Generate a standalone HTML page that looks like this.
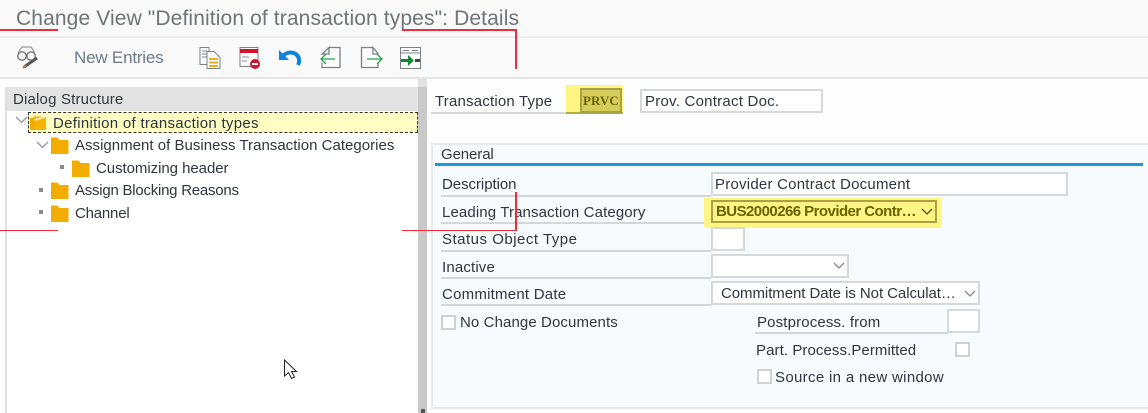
<!DOCTYPE html>
<html><head><meta charset="utf-8">
<style>
html,body{margin:0;padding:0;background:#fff}
#w{position:relative;width:1148px;height:413px;overflow:hidden;background:#fff}
#p{position:absolute;left:0;top:0;width:1148px;height:413px;overflow:hidden;background:#fff;font-family:"Liberation Sans",sans-serif;font-size:15px;color:#2f3640;filter:blur(.35px)}
#p div,#p svg{position:absolute}
.t{white-space:nowrap;line-height:18px;height:18px;margin-top:1px}
.f{background:#fff;border:2px solid #d6d9da;box-sizing:border-box}
.u{height:2px;background:#d4d7d8}
.r{position:absolute;background:#ee2c3a}
.c{background:#fff;border:2px solid #cfd1d2;box-sizing:border-box;width:15px;height:15px}
</style></head><body><div id="w"><div id="p">
<div style="left:0;top:0;width:1148px;height:36px;background:#fafafa"></div>
<div style="left:0;top:36px;width:1148px;height:2px;background:#ececec"></div>
<div style="left:0;top:38px;width:1148px;height:39px;background:#fafafa"></div>
<div style="left:0;top:77px;width:1148px;height:2px;background:#e6e6e6"></div>
<div class="t" style="left:16px;top:8px;font-size:21px;height:20px;line-height:20px;color:#6f7478;letter-spacing:.12px">Change View "Definition of transaction types": Details</div>
<div class="t" style="left:74px;top:48px;font-size:17px;color:#6d7a86;letter-spacing:-.2px">New Entries</div>

<svg style="left:15px;top:44px" width="26" height="26" viewBox="0 0 26 26" fill="none"><circle cx="7" cy="12" r="4.2" stroke="#777" stroke-width="1.4"/><circle cx="16" cy="12" r="4.2" stroke="#777" stroke-width="1.4"/><path d="M3 9 7 3h9l4 6" stroke="#999" stroke-width="1.2"/><path d="M9 23 22 14" stroke="#555" stroke-width="3"/><path d="M8 24l3-3" stroke="#c47a20" stroke-width="2"/></svg>

<svg style="left:198px;top:46px" width="25" height="24" viewBox="0 0 25 24" fill="none"><path d="M2 1.500h9v17H2z" fill="#fff" stroke="#7a8288"/><path d="M4 5h5M4 8h5M4 11h5" stroke="#7a8288"/><path d="M9 5.500h7l6 6v11H9z" fill="#fff" stroke="#7a8288"/><path d="M11 12h9v2h-9zM11 15.500h9v2h-9zM11 19h9v2h-9z" fill="#f0ad1d"/></svg>
<svg style="left:238px;top:46px" width="25" height="24" viewBox="0 0 25 24" fill="none"><path d="M2 1.500h18v19H2z" fill="#fff" stroke="#7a8288"/><path d="M2 3h18v4H2z" fill="#d2142c"/><path d="M4 11h7M4 15h5" stroke="#888"/><circle cx="17" cy="18" r="5" fill="#d2142c"/><path d="M14 18h6" stroke="#fff" stroke-width="2"/></svg>
<svg style="left:278px;top:47px" width="25" height="22" viewBox="0 0 25 22" fill="none"><path d="M1 3v10h10z" fill="#0a84e0"/><path d="M5 9c4-5 14-5 16 3 .5 2 0 4-1 6" stroke="#0a84e0" stroke-width="4"/></svg>
<svg style="left:319px;top:46px" width="24" height="24" viewBox="0 0 24 24" fill="none"><path d="M10 1.500h11v20H3v-5M3 9V8l7-6.500V8H4" stroke="#7a8288" stroke-width="1.300"/><path d="M2 13h14M7 8l-5 5 5 5" stroke="#2ba24b" stroke-width="1.300"/></svg>
<svg style="left:359px;top:46px" width="26" height="24" viewBox="0 0 26 24" fill="none"><path d="M14 1.500H2.500v20H19v-4M19 8V7.500l-5-6V8h5" stroke="#7a8288" stroke-width="1.300"/><path d="M8 13h15M18 8l5 5-5 5" stroke="#2ba24b" stroke-width="1.300"/></svg>
<svg style="left:399px;top:46px" width="24" height="24" viewBox="0 0 24 24" fill="none"><path d="M1.500 1.500h20v21h-20z" fill="#fff" stroke="#7a8288"/><path d="M1.500 7h20M4 4.500h6M13 4.500h4M17 4.500h2" stroke="#7a8288"/><path d="M2 13h7V9l6 5.500-6 5.500v-4H2z" fill="#0f8a32"/><path d="M16 13h5v3h-5z" fill="#444"/></svg>

<!-- left pane -->
<div style="left:5px;top:87px;width:2px;height:326px;background:#e0e0e0"></div>
<div style="left:7px;top:87px;width:411px;height:24px;background:#e3e3e3"></div>
<div class="t" style="left:13px;top:90px;color:#33383e;letter-spacing:.18px">Dialog Structure</div>
<div style="left:418px;top:79px;width:9px;height:8px;background:#e2e2e2"></div>
<div style="left:418px;top:87px;width:9px;height:326px;background:#c9c9c9"></div>
<div style="left:421px;top:409px;width:4px;height:4px;background:#555"></div>

<div style="left:28px;top:112px;width:390px;height:21px;box-sizing:border-box;background:#ffffc4;border:1px dashed #333"></div>
<svg style="left:15px;top:116px" width="13" height="9" fill="none"><path d="M1 1l5.500 5.500L12 1" stroke="#8d97a8" stroke-width="1.300"/></svg>
<svg style="left:29px;top:114px" width="20" height="18"><path d="M1 4h3l1-1.500h11V16H1z" fill="#f0ac00"/><path d="M6 6l11-3v13H6z" fill="#f7b500"/><path d="M5 5l11-3v2L6 7z" fill="#fff" opacity=".7"/></svg>
<div class="t" style="left:53px;top:114px;letter-spacing:.29px;color:#2c3440">Definition of transaction types</div>

<svg style="left:36px;top:141px" width="13" height="9" fill="none"><path d="M1 1l5.500 5.500L12 1" stroke="#8d97a8" stroke-width="1.300"/></svg>
<svg style="left:50px;top:137px" width="19" height="18"><path d="M1 .5h6.500l2 2.500H18.500v14H1z" fill="#f3ad00"/></svg>
<div class="t" style="left:75px;top:136px;letter-spacing:.02px">Assignment of Business Transaction Categories</div>

<div style="left:60px;top:165px;width:4px;height:4px;background:#8a8a8a"></div>
<svg style="left:71px;top:160px" width="19" height="18"><path d="M1 .5h6.500l2 2.500H18.500v14H1z" fill="#f3ad00"/></svg>
<div class="t" style="left:96px;top:159px;letter-spacing:-.05px">Customizing header</div>

<div style="left:39px;top:188px;width:4px;height:4px;background:#8a8a8a"></div>
<svg style="left:50px;top:182px" width="19" height="18"><path d="M1 .5h6.500l2 2.500H18.500v14H1z" fill="#f3ad00"/></svg>
<div class="t" style="left:75px;top:181px;letter-spacing:-.24px">Assign Blocking Reasons</div>

<div style="left:39px;top:210px;width:4px;height:4px;background:#8a8a8a"></div>
<svg style="left:50px;top:205px" width="19" height="18"><path d="M1 .5h6.500l2 2.500H18.500v14H1z" fill="#f3ad00"/></svg>
<div class="t" style="left:75px;top:204px;letter-spacing:-.2px">Channel</div>

<svg style="left:283px;top:359px" width="15" height="21" fill="none"><path d="M1.500 1v16l4-3.500 3 6 3-1.500-3-5.500h5z" fill="#fff" stroke="#222" stroke-width="1"/></svg>

<!-- right pane -->
<div style="left:427px;top:79px;width:721px;height:334px;background:#fdfdfe"></div>
<div class="t" style="left:435px;top:92px;letter-spacing:.19px">Transaction Type</div>
<div class="u" style="left:431px;top:112px;width:136px"></div>
<div style="left:566px;top:85px;width:57px;height:29px;background:#fff585"></div>
<div style="left:566px;top:112px;width:57px;height:2px;background:#b3ac3c"></div>
<div style="left:580px;top:88px;width:42px;height:25px;box-sizing:border-box;background:#d5cc5c;border:2px solid #a8a244"></div>
<div class="t" style="left:583px;top:91px;font-family:'Liberation Serif',serif;font-weight:bold;font-size:13px;color:#6a6400;letter-spacing:0">PRVC</div>
<div class="f" style="left:640px;top:89px;width:183px;height:24px"></div>
<div class="t" style="left:645px;top:92px;letter-spacing:.24px">Prov. Contract Doc.</div>

<div style="left:431px;top:143px;width:717px;height:264px;background:#f7fbfd;border-top:2px solid #e8eaeb;border-left:2px solid #e8eaeb;box-sizing:border-box"></div>
<div style="left:431px;top:407px;width:717px;height:2px;background:#e5eaec"></div>
<div class="t" style="left:441px;top:145px;letter-spacing:-.1px">General</div>
<div style="left:435px;top:163px;width:708px;height:3px;background:#1c9ad8"></div>

<div class="t" style="left:442px;top:175px;letter-spacing:-.05px">Description</div>
<div class="u" style="left:441px;top:195px;width:270px"></div>
<div class="f" style="left:711px;top:172px;width:357px;height:24px"></div>
<div class="t" style="left:715px;top:175px;letter-spacing:.23px">Provider Contract Document</div>

<div class="t" style="left:442px;top:203px;letter-spacing:.12px">Leading Transaction Category</div>
<div class="u" style="left:441px;top:222px;width:265px"></div>
<div style="left:704px;top:198px;width:237px;height:30px;background:#fff585"></div>
<div style="left:711px;top:200px;width:226px;height:23px;box-sizing:border-box;background:#fff585;border:2px solid #a8a244"></div>
<div class="t" style="left:716px;top:202px;font-weight:bold;color:#6a6400;letter-spacing:-.55px">BUS2000266 Provider Contr…</div>
<svg style="left:921px;top:208px" width="12" height="8" fill="none"><path d="M1 1l5 5 5-5" stroke="#55500a" stroke-width="1.300"/></svg>

<div class="t" style="left:442px;top:230px;letter-spacing:.5px">Status Object Type</div>
<div class="u" style="left:441px;top:250px;width:270px"></div>
<div class="f" style="left:711px;top:227px;width:34px;height:24px"></div>

<div class="t" style="left:442px;top:258px;letter-spacing:.16px">Inactive</div>
<div class="u" style="left:441px;top:277px;width:270px"></div>
<div class="f" style="left:711px;top:254px;width:138px;height:24px"></div>
<svg style="left:833px;top:262px" width="12" height="8" fill="none"><path d="M1 1l5 5 5-5" stroke="#7c8a98" stroke-width="1.300"/></svg>

<div class="t" style="left:442px;top:285px;letter-spacing:.23px">Commitment Date</div>
<div class="u" style="left:441px;top:304px;width:270px"></div>
<div class="f" style="left:711px;top:281px;width:269px;height:24px"></div>
<div class="t" style="left:721px;top:284px;letter-spacing:-.06px">Commitment Date is Not Calculat…</div>
<svg style="left:964px;top:290px" width="12" height="8" fill="none"><path d="M1 1l5 5 5-5" stroke="#7c8a98" stroke-width="1.300"/></svg>

<div class="c" style="left:441px;top:315px"></div>
<div class="t" style="left:460px;top:313px;letter-spacing:.1px">No Change Documents</div>

<div class="t" style="left:757px;top:313px;letter-spacing:.15px">Postprocess. from</div>
<div class="u" style="left:755px;top:332px;width:193px"></div>
<div class="f" style="left:947px;top:309px;width:33px;height:24px"></div>

<div class="t" style="left:756px;top:341px;letter-spacing:.08px">Part. Process.Permitted</div>
<div class="c" style="left:955px;top:342px"></div>

<div class="c" style="left:757px;top:369px"></div>
<div class="t" style="left:775px;top:368px;letter-spacing:.33px">Source in a new window</div>
</div>
<!-- red lines -->
<div class="r" style="left:0;top:29px;width:58px;height:2px"></div>
<div class="r" style="left:402px;top:29px;width:114px;height:2px"></div>
<div class="r" style="left:515px;top:29px;width:2px;height:40px"></div>
<div class="r" style="left:0;top:230px;width:58px;height:1px"></div>
<div class="r" style="left:402px;top:230px;width:114px;height:1px"></div>
<div class="r" style="left:515px;top:192px;width:2px;height:39px"></div>
</div></body></html>
